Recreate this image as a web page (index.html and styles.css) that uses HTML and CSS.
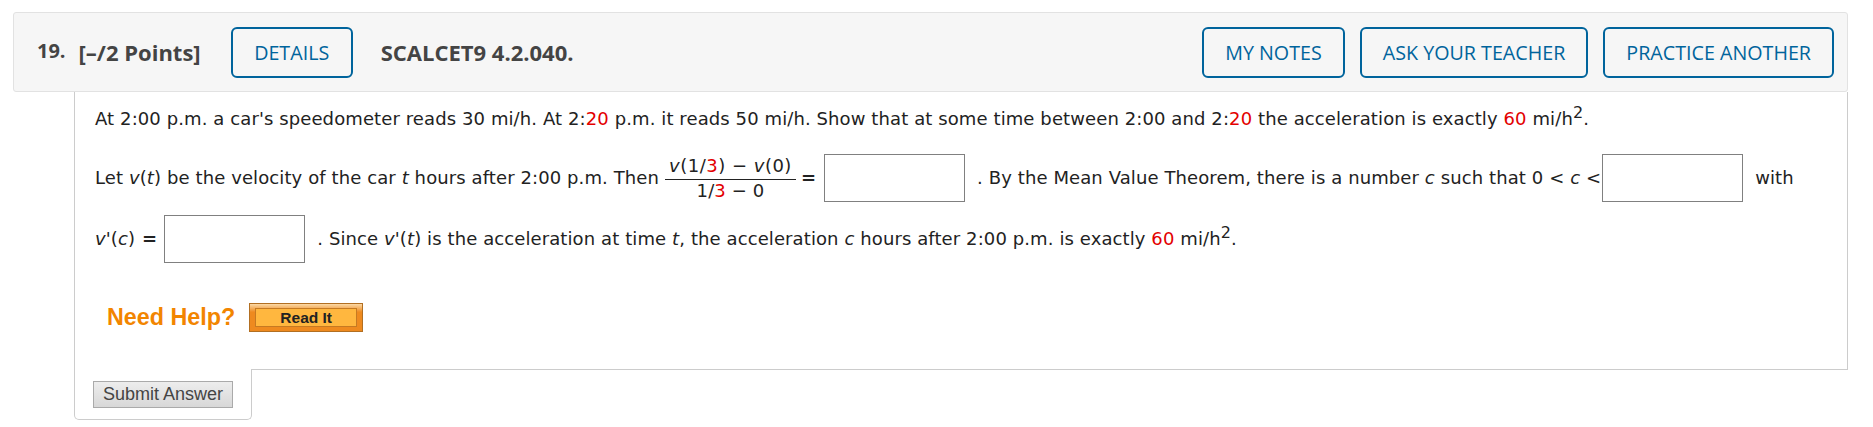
FILE: index.html
```html
<!DOCTYPE html>
<html lang="en">
<head>
    <meta charset="UTF-8">
    <title>SCALCET9 4.2.040.</title>
    <link rel="stylesheet" href="styles.css">
</head>
<body>

<div class="question">
    <div class="question-head">
        <span class="q-number">19.</span>
        <span class="q-points">[&ndash;/2 Points]</span>
        <button class="head-btn details-btn" type="button">DETAILS</button>
        <span class="q-ref">SCALCET9 4.2.040.</span>
        <div class="head-actions">
            <button class="head-btn" type="button">MY NOTES</button>
            <button class="head-btn" type="button">ASK YOUR TEACHER</button>
            <button class="head-btn" type="button">PRACTICE ANOTHER</button>
        </div>
    </div>

    <div class="question-body">
        <p class="line line-first">At 2:00 p.m. a car's speedometer reads 30 mi/h. At 2:<span class="red">20</span> p.m. it reads 50 mi/h. Show that at some time between 2:00 and 2:<span class="red">20</span> the acceleration is exactly <span class="red">60</span> mi/h<sup>2</sup>.</p>

        <div class="line line-wide">
            <span class="line-text">Let <i>v</i>(<i>t</i>) be the velocity of the car <i>t</i> hours after 2:00 p.m. Then</span>
            <span class="frac">
                <span class="frac-top"><i>v</i>(1/<span class="red">3</span>) &minus; <i>v</i>(0)</span>
                <span class="frac-bottom">1/<span class="red">3</span> &minus; 0</span>
            </span>
            <span class="eq">=</span>
            <input class="answer" type="text">
            <span class="after-answer">. By the Mean Value Theorem, there is a number <i>c</i> such that 0 &lt; <i>c</i> &lt;</span>
            <input class="answer" type="text">
            <span class="after-answer">with</span>
        </div>

        <div class="line">
            <span class="line-text"><i>v'</i>(<i>c</i>)</span>
            <span class="eq">=</span>
            <input class="answer" type="text">
            <span class="after-answer">. Since <i>v'</i>(<i>t</i>) is the acceleration at time <i>t</i>, the acceleration <i>c</i> hours after 2:00 p.m. is exactly <span class="red">60</span> mi/h<sup>2</sup>.</span>
        </div>

        <div class="help">
            <span class="help-label">Need Help?</span>
            <button class="read-it" type="button"><span>Read It</span></button>
        </div>
    </div>

    <div class="submit-tab">
        <button class="submit-btn" type="button">Submit Answer</button>
    </div>
</div>

</body>
</html>
```

FILE: styles.css
```css
body {
    margin: 0;
    background: #fff;
    font-family: "DejaVu Sans", Verdana, sans-serif;
    color: #222;
}

.question {
    margin: 12px 25px 0 13px;
}

.question-head {
    display: flex;
    align-items: center;
    height: 80px;
    box-sizing: border-box;
    padding: 0 13px 0 23px;
    background: #f6f6f6;
    border: 1px solid #e2e2e2;
    border-radius: 3px;
    font-family: "Open Sans", sans-serif;
    color: #444;
}

.q-number {
    font-size: 20px;
    font-weight: 700;
    margin-right: 13px;
    position: relative;
    top: -2px;
}

.q-points {
    font-size: 22px;
    font-weight: 700;
}

.q-ref {
    font-size: 22px;
    font-weight: 700;
    margin-left: 28px;
}

.head-btn {
    height: 51px;
    padding: 0 21px;
    background: #f6f6f6;
    border: 2px solid #00649c;
    border-radius: 6px;
    color: #00649c;
    font-family: "Open Sans", sans-serif;
    font-size: 19.7px;
    font-weight: 500;
}

.details-btn {
    margin-left: 30px;
    padding: 0 21.5px;
}

.head-actions {
    display: flex;
    gap: 15px;
    margin-left: auto;
}

.question-body {
    margin-left: 61px;
    padding: 0 19px 0 20px;
    height: 278px;
    border: 1px solid #ccc;
    border-top: none;
    box-sizing: border-box;
    font-size: 18px;
    letter-spacing: 0.1px;
}

.line {
    display: flex;
    align-items: center;
    margin: 0;
    height: 50px;
    white-space: nowrap;
}

.line-first {
    display: block;
    height: auto;
    line-height: 20px;
    padding-top: 17px;
    margin-bottom: 24px;
}

.line-wide {
    margin-bottom: 11px;
}

.line-text {
    margin-bottom: 2px;
}

.red {
    color: #e30000;
}

sup {
    font-size: 16px;
    line-height: 0;
}

.frac {
    display: inline-flex;
    flex-direction: column;
    align-items: center;
    margin-left: 6px;
}

.frac-top {
    padding: 0 4px 2px;
    border-bottom: 1px solid #222;
    line-height: 22px;
    letter-spacing: 0.5px;
}

.frac-bottom {
    line-height: 22px;
}

.eq {
    margin: 0 7px 2px;
    font-weight: 700;
}

.frac + .eq {
    margin-left: 5px;
    margin-right: 8px;
}

.answer {
    width: 141px;
    height: 48px;
    box-sizing: border-box;
    margin: 0;
    background: #fff;
    border: 1px solid #808080;
}

.after-answer {
    margin: 0 1px 2px 12px;
}

.help {
    display: flex;
    align-items: center;
    gap: 14px;
    margin: 39px 0 0 12px;
}

.help-label {
    font-family: "Liberation Sans", Arial, sans-serif;
    font-size: 23.3px;
    font-weight: 700;
    color: #f28500;
    letter-spacing: 0;
}

.read-it {
    width: 114px;
    height: 29px;
    padding: 4px 5px;
    background: linear-gradient(#fbd9a6, #ee8a1f 30%, #ee8a1f);
    border: 1px solid #b26f22;
    font-family: "Liberation Sans", Arial, sans-serif;
    font-size: 15.5px;
    font-weight: 700;
    color: #222;
}

.read-it span {
    display: block;
    height: 100%;
    line-height: 17px;
    background: #ffb73f;
    border: 1px solid #c67a22;
    box-sizing: border-box;
}

.submit-tab {
    width: 178px;
    height: 51px;
    margin: -1px 0 0 61px;
    padding: 12px 0 0 18px;
    box-sizing: border-box;
    position: relative;
    background: #fff;
    border: 1px solid #ccc;
    border-top: none;
    border-radius: 0 0 5px 5px;
}

.submit-btn {
    width: 140px;
    height: 27px;
    padding: 0;
    background: linear-gradient(#ededed, #d8d8d8);
    border: 1px solid #aaa;
    font-family: "Liberation Sans", Arial, sans-serif;
    font-size: 18px;
    color: #444;
}
```
